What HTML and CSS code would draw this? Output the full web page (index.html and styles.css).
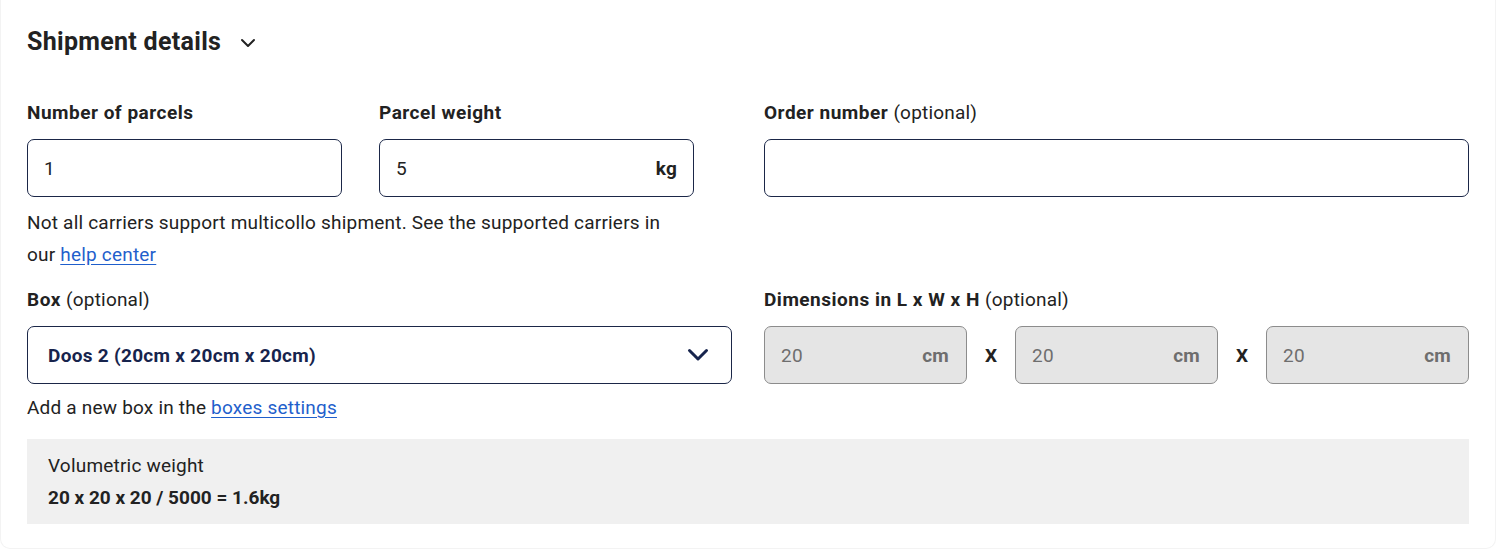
FILE: index.html
```html
<!DOCTYPE html>
<html lang="en">
<head>
<meta charset="utf-8">
<title>Shipment details</title>
<link rel="stylesheet" href="styles.css">
</head>
<body>
<div class="card">
  <div class="header">
    <h2 class="title">Shipment details</h2>
    <svg class="title-chevron" width="16" height="10" viewBox="0 0 16 10"><path d="M2 2 L8 8 L14 2" fill="none" stroke="#222" stroke-width="2" stroke-linecap="round" stroke-linejoin="round"/></svg>
  </div>
  <div class="grid">
    <div class="cell">
      <div class="pair">
        <div class="field">
          <div class="label">Number of parcels</div>
          <div class="input"><span>1</span></div>
        </div>
        <div class="field">
          <div class="label">Parcel weight</div>
          <div class="input"><span>5</span><span class="unit">kg</span></div>
        </div>
      </div>
      <p class="help help-first">Not all carriers support multicollo shipment. See the supported carriers in our <a href="#">help center</a></p>
    </div>
    <div class="cell">
      <div class="field">
        <div class="label">Order number <span class="opt">(optional)</span></div>
        <div class="input"></div>
      </div>
    </div>
    <div class="cell">
      <div class="field">
        <div class="label">Box <span class="opt">(optional)</span></div>
        <div class="select">
          <span>Doos 2 (20cm x 20cm x 20cm)</span>
          <svg width="22" height="14" viewBox="0 0 22 14"><path d="M2.5 2.5 L11 11 L19.5 2.5" fill="none" stroke="#17244d" stroke-width="3" stroke-linecap="round" stroke-linejoin="round"/></svg>
        </div>
      </div>
      <p class="help help-second">Add a new box in the <a href="#">boxes settings</a></p>
    </div>
    <div class="cell">
      <div class="field">
        <div class="label">Dimensions in L x W x H <span class="opt">(optional)</span></div>
        <div class="dims">
          <div class="dim"><span>20</span><span class="unit">cm</span></div>
          <span class="times">X</span>
          <div class="dim"><span>20</span><span class="unit">cm</span></div>
          <span class="times">X</span>
          <div class="dim"><span>20</span><span class="unit">cm</span></div>
        </div>
      </div>
    </div>
  </div>
  <div class="volumetric">
    <div>Volumetric weight</div>
    <div class="vol-value">20 x 20 x 20 / 5000 = 1.6kg</div>
  </div>
</div>
</body>
</html>
```

FILE: styles.css
```css
* { box-sizing: border-box; }
html, body { margin: 0; padding: 0; background: #ffffff; }
body {
  font-family: Roboto, "Liberation Sans", sans-serif;
  font-size: 19px;
  letter-spacing: 0.2px;
  color: #222222;
}
.card {
  width: 1496px;
  height: 549px;
  border: 1px solid #f3f3f3;
  border-top: none;
  border-radius: 0 0 10px 10px;
  padding: 26px 26px 0 26px;
}
.header {
  display: flex;
  align-items: center;
  gap: 19px;
  height: 32px;
}
.title {
  margin: 0;
  font-size: 25px;
  font-weight: 700;
  letter-spacing: 0.3px;
  line-height: 32px;
  color: #222222;
}
.title-chevron { margin-top: 2px; }
.grid {
  margin-top: 43px;
  display: grid;
  grid-template-columns: 705px 705px;
  column-gap: 32px;
}
.pair {
  display: flex;
  gap: 37px;
}
.pair .field { width: 315px; }
.label {
  font-weight: 700;
  letter-spacing: 0.5px;
  line-height: 24px;
  margin-bottom: 14px;
}
.opt { font-weight: 400; letter-spacing: 0.2px; }
.input {
  height: 58px;
  border: 1px solid #1b2748;
  border-radius: 7px;
  display: flex;
  align-items: center;
  justify-content: space-between;
  padding: 0 16px;
}
.unit { font-weight: 700; }
.help {
  margin: 0;
  line-height: 32px;
  max-width: 660px;
}
.help-first { margin-top: 10px; margin-bottom: 17px; }
.help-second { margin-top: 8px; }
.help a { color: #1f5fcc; text-decoration: underline; text-underline-offset: 3px; }
.select {
  height: 58px;
  border: 1px solid #1b2748;
  border-radius: 7px;
  display: flex;
  align-items: center;
  justify-content: space-between;
  padding: 0 22px 0 20px;
  font-weight: 700;
  letter-spacing: 0.3px;
  color: #17244d;
}
.dims {
  display: flex;
  align-items: center;
  gap: 18px;
}
.dim {
  flex: 1;
  height: 58px;
  background: #e5e5e5;
  border: 1px solid #8c8c8c;
  border-radius: 7px;
  display: flex;
  align-items: center;
  justify-content: space-between;
  padding: 0 17px 0 16px;
  color: #6e6e6e;
}
.times {
  width: 12px;
  text-align: center;
  font-weight: 700;
  color: #222222;
}
.volumetric {
  margin-top: 15px;
  background: #f0f0f0;
  padding: 11px 21px 10px;
  line-height: 32px;
}
.vol-value { font-weight: 700; letter-spacing: 0; }
```
